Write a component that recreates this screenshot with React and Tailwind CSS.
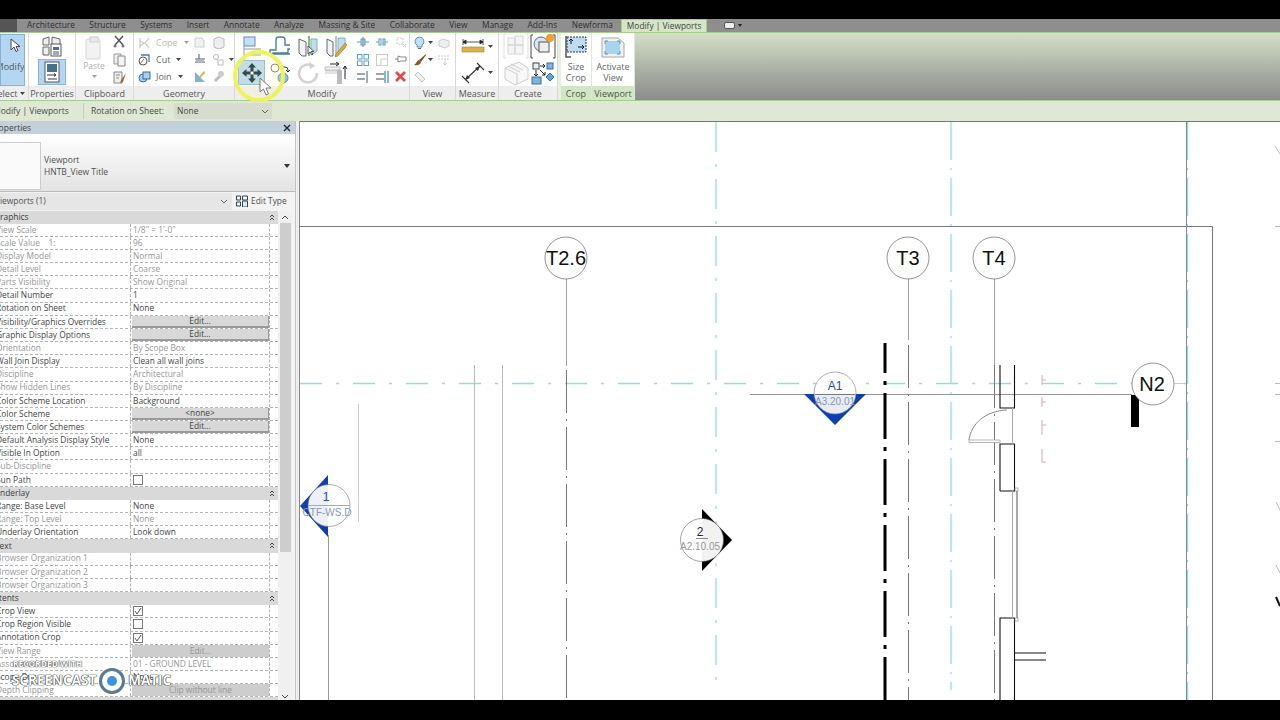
import React from 'react';

const TABS = ['Architecture', 'Structure', 'Systems', 'Insert', 'Annotate', 'Analyze', 'Massing & Site', 'Collaborate', 'View', 'Manage', 'Add-Ins', 'Newforma'];

// row kinds: h = group header, b = button, c = checkbox
const ROWS = [
  { h: 'Graphics', off: '-ml-[6px]' },
  { l: 'View Scale', v: '1/8" = 1\'-0"', d: 1 },
  { l: 'Scale Value    1:', v: '96', d: 1 },
  { l: 'Display Model', v: 'Normal', d: 1 },
  { l: 'Detail Level', v: 'Coarse', d: 1 },
  { l: 'Parts Visibility', v: 'Show Original', d: 1 },
  { l: 'Detail Number', v: '1' },
  { l: 'Rotation on Sheet', v: 'None' },
  { l: 'Visibility/Graphics Overrides', b: 'Edit...' },
  { l: 'Graphic Display Options', b: 'Edit...' },
  { l: 'Orientation', v: 'By Scope Box', d: 1 },
  { l: 'Wall Join Display', v: 'Clean all wall joins' },
  { l: 'Discipline', v: 'Architectural', d: 1 },
  { l: 'Show Hidden Lines', v: 'By Discipline', d: 1 },
  { l: 'Color Scheme Location', v: 'Background' },
  { l: 'Color Scheme', b: '<none>' },
  { l: 'System Color Schemes', b: 'Edit...' },
  { l: 'Default Analysis Display Style', v: 'None' },
  { l: 'Visible In Option', v: 'all' },
  { l: 'Sub-Discipline', v: '', d: 1 },
  { l: 'Sun Path', c: 0 },
  { h: 'Underlay', off: '-ml-[6px]' },
  { l: 'Range: Base Level', v: 'None' },
  { l: 'Range: Top Level', v: 'None', d: 1 },
  { l: 'Underlay Orientation', v: 'Look down' },
  { h: 'Text', off: '-ml-[5px]' },
  { l: 'Browser Organization 1', v: '', d: 1 },
  { l: 'Browser Organization 2', v: '', d: 1 },
  { l: 'Browser Organization 3', v: '', d: 1 },
  { h: 'Extents', off: '-ml-[10px]' },
  { l: 'Crop View', c: 1 },
  { l: 'Crop Region Visible', c: 0 },
  { l: 'Annotation Crop', c: 1 },
  { l: 'View Range', b: 'Edit...', d: 1 },
  { l: 'Associated Level', v: '01 - GROUND LEVEL', d: 1 },
  { l: 'Scope Box', v: 'None' },
  { l: 'Depth Clipping', b: 'Clip without line', d: 1 },
  { h: 'Identity Data', off: '-ml-[6px]' },
];

const Ic = ({ s = 20, h, vb, children }) => (
  <svg width={s} height={h || s} viewBox={vb || `0 0 ${s} ${h || s}`} className="shrink-0">{children}</svg>
);

const Caret = () => (
  <svg width="5" height="3" viewBox="0 0 5 3" className="shrink-0"><path d="M0 0h5L2.500 3z" fill="#444" /></svg>
);

const Panel = ({ w, label, green, children, labelClass = '' }) => (
  <div className={`${w} h-full flex flex-col shrink-0 overflow-hidden border-r ${green ? 'border-[#dcebd0]' : 'border-[#d9d9d9]'}`}>
    <div className="flex-1 min-h-0 flex bg-white">{children}</div>
    <div className={`h-[14px] flex items-center justify-center text-[9px] leading-none whitespace-nowrap ${green ? 'bg-[#d3e6c4] text-[#4b5a45]' : 'bg-[#eeeeee] text-[#555]'} ${labelClass}`}>{label}</div>
  </div>
);

const Small = ({ children }) => <div className="w-[19px] h-[17px] flex items-center justify-center">{children}</div>;

const G = ({ c = '#b9bec4', children }) => <g stroke={c} fill="none">{children}</g>;

function SmallIcon({ k }) {
  const blue = '#5f9fc4';
  const dark = '#445';
  const map = {
    alignA: <G c={blue}><path d="M1 6h4M9 6h4" /><rect x="5" y="3" width="4" height="6" fill="#bcdcf0" /><path d="M7 1v10" stroke="#789" /></G>,
    alignB: <G c={blue}><path d="M1 6h3M10 6h3" /><rect x="4" y="3" width="2" height="6" /><rect x="8" y="3" width="2" height="6" fill="#bcdcf0" /></G>,
    del1: <G c="#ccc"><rect x="3" y="2" width="6" height="6" strokeDasharray="2 1" /><path d="M9 8l3 3M12 8l-3 3" /></G>,
    grid: <G c={blue}><rect x="1.500" y="1.500" width="4.500" height="4.500" /><rect x="8" y="1.500" width="4.500" height="4.500" /><rect x="1.500" y="8" width="4.500" height="4.500" /><rect x="8" y="8" width="4.500" height="4.500" /></G>,
    scale: <G c="#ccc"><rect x="1.500" y="1.500" width="11" height="11" /><path d="M6 12.500V6h6.500" /></G>,
    pin: <G c="#888"><path d="M1 6h3M4 3l3 1h5v4H7l-3 1z" /></G>,
    trimA: <G c={dark}><path d="M1 4h8M1 9h8" /><path d="M11 1v12" stroke="#79a" strokeWidth="1.500" /></G>,
    trimB: <G c={dark}><path d="M1 4h8M1 9h8" /><path d="M10 1v12M13 1v12" stroke={blue} strokeWidth="1.500" /></G>,
    del: <path d="M2 2l9 9M11 2l-9 9" stroke="#dc4b4b" strokeWidth="2.800" fill="none" />,
  };
  return <Ic s={14}>{map[k]}</Ic>;
}

function Ribbon() {
  return (
    <div className="h-[69px] flex border-t border-b border-[#a7cc92] bg-linear-to-b from-[#d3e0c6] to-[#8c8c8c] font-['Open_Sans',sans-serif] text-[#666]">
      {/* Select */}
      <Panel w="w-[29px]" label={<span className="flex items-center gap-[3px] -ml-[10px]">Select <Caret /></span>}>
        <div className="w-[25px] h-[52px] mt-[1px] bg-[#b5d6f1] border border-[#86b2d6] flex flex-col items-center overflow-hidden">
          <div className="mt-[3px] ml-[4px]">
            <Ic s={14}><path d="M3 1v11l3-3 2 4.500 2-1-2-4h4z" fill="#fff" stroke="#445" /></Ic>
          </div>
          <div className="mt-[10px] -ml-[5px] text-[9px] leading-none whitespace-nowrap text-[#555]">Modify</div>
        </div>
      </Panel>

      {/* Properties */}
      <Panel w="w-[47px]" label="Properties">
        <div className="w-full flex flex-col items-center">
          <div className="h-[26px] flex items-center">
            <Ic s={22}>
              <path d="M2 4l6-2v8H2zM11 2l8 2v6h-8zM2 12h6v8H2z" fill="#eee" stroke="#666" />
              <rect x="10" y="9" width="10" height="12" fill="#fff" stroke="#555" />
              <path d="M12 12h6v3h-6z" fill="#47708f" /><path d="M12 17h6M12 19h6" stroke="#555" />
            </Ic>
          </div>
          <div className="w-[28px] h-[26px] bg-[#b5d6f1] border border-[#8ab5d8] flex items-center justify-center">
            <Ic s={18} h={22}>
              <rect x="2" y="1" width="14" height="20" fill="#fff" stroke="#556" />
              <rect x="4" y="3" width="10" height="8" fill="#47708f" />
              <path d="M4 14h9M5 18h9M11 12.500l2 1.500-2 1.500" stroke="#334" fill="none" />
            </Ic>
          </div>
        </div>
      </Panel>

      {/* Clipboard */}
      <Panel w="w-[58px]" label="Clipboard">
        <div className="w-[36px] flex flex-col items-center pt-[3px]">
          <Ic s={20} h={24}>
            <rect x="2" y="3" width="14" height="20" rx="1" fill="#f2f2f2" stroke="#d5d5d5" />
            <rect x="6" y="1" width="8" height="5" fill="#e9e9e9" stroke="#ccc" />
          </Ic>
          <div className="mt-[2px] text-[8.500px] leading-none text-[#b0b0b0]">Paste</div>
          <div className="mt-[4px] opacity-50"><Caret /></div>
        </div>
        <div className="flex flex-col justify-start pt-[1px] gap-[3px]">
          <Ic s={15}><path d="M3 2l8 9M11 2l-8 9" stroke="#555" strokeWidth="1.500" /><circle cx="3" cy="12" r="1.500" fill="#777" /><circle cx="11" cy="12" r="1.500" fill="#777" /></Ic>
          <Ic s={15}><path d="M2 2h7v10H2z" fill="#eee" stroke="#999" /><path d="M6 4h7v10H6z" fill="#f5f5f5" stroke="#888" /></Ic>
          <Ic s={15}><path d="M2 2h8v11H2z" fill="#eee" stroke="#888" /><path d="M4 5h4M4 8h3" stroke="#888" /><path d="M14 3l-5 7-1 3 3-1z" fill="#a06a3a" /></Ic>
        </div>
      </Panel>

      {/* Geometry */}
      <Panel w="w-[101px]" label="Geometry">
        <div className="flex flex-col w-[56px] pl-[4px] pt-[1px] text-[9px] leading-none">
          <div className="h-[17px] flex items-center gap-[5px] text-[#bbb]">
            <Ic s={13}><path d="M2 2v10M2 5l4 2-4 3M11 2L7 7l4 5" stroke="#ccc" fill="none" strokeWidth="1.300" /></Ic>Cope<span className="ml-[1px] opacity-50"><Caret /></span>
          </div>
          <div className="h-[17px] flex items-center gap-[5px] text-[#666]">
            <Ic s={13}><circle cx="5" cy="8" r="4" fill="#fff" stroke="#555" /><path d="M3 2h8v7" stroke="#3f7fb0" fill="none" strokeWidth="1.300" /><path d="M2 11l4-5" stroke="#c54" /></Ic>Cut<span className="ml-[1px]"><Caret /></span>
          </div>
          <div className="h-[17px] flex items-center gap-[5px] text-[#666]">
            <Ic s={13}><circle cx="5" cy="8" r="4" fill="#a9cfe9" stroke="#35709c" /><rect x="5" y="2" width="7" height="7" fill="#a9cfe9" stroke="#35709c" /></Ic>Join<span className="ml-[1px]"><Caret /></span>
          </div>
        </div>
        <div className="grid grid-cols-[19px_19px_6px] grid-rows-[17px_17px_17px] pt-[1px] items-center justify-items-center">
          <Ic s={13}><path d="M2 2h7l2 3v6H2z" fill="#eef2f5" stroke="#ccc" /></Ic>
          <Ic s={13}><path d="M2 3l5-2 5 2v8l-5 2-5-2z" fill="#eee" stroke="#bbb" /></Ic>
          <span />
          <Ic s={13}><path d="M6 1v5M2 6h10M2 9h10" stroke="#557" /><rect x="3" y="7" width="8" height="2" fill="#abc" /></Ic>
          <Ic s={13}><circle cx="4" cy="4" r="2.500" fill="none" stroke="#bbb" /><rect x="6" y="7" width="5" height="5" fill="none" stroke="#bbb" /></Ic>
          <Caret />
          <Ic s={13}><path d="M2 2v10h10z" fill="#7fb5dc" /><path d="M11 1L6 7l-1 2 2-1 5-5z" fill="#d8a93c" /></Ic>
          <Ic s={13}><path d="M3 11l5-5" stroke="#bbb" strokeWidth="3" /><circle cx="9" cy="4" r="3" fill="#ccc" /></Ic>
          <span />
        </div>
      </Panel>

      {/* Modify */}
      <Panel w="w-[175px]" label="Modify">
        <div className="grid grid-cols-[29px_28px_28px_28px] grid-rows-[26px_27px] w-[116px] pl-[2px] justify-items-center items-center">
          <Ic s={22}><rect x="3" y="2" width="11" height="9" fill="#c6dff2" stroke="#5f8fb5" /><path d="M3 11v9h17M3 14h17" stroke="#999" fill="none" /></Ic>
          <Ic s={24}><path d="M2 20v-4h6V6a3 3 0 0 1 3-3h3a3 3 0 0 1 3 3v5h5M2 20h20M5 20v-1h15v-4h2" fill="none" stroke="#4c7ea5" strokeWidth="1.400" /></Ic>
          <Ic s={22}><path d="M2 4l7 3v14H5l-3-3z" fill="#f1f3f5" stroke="#667" /><path d="M12 1v20" stroke="#52a350" strokeWidth="1.500" /><path d="M14 4h6v12l-6 4z" fill="#c0dcf0" stroke="#7ba" /><path d="M11 11v8l2-2 2 3 1-1-2-2.500h3z" fill="#fff" stroke="#556" /></Ic>
          <Ic s={22}><path d="M2 4l6 3v14H5l-3-3z" fill="#f1f3f5" stroke="#667" /><path d="M11 1v20" stroke="#789" /><path d="M13 3h7v10l-7 6z" fill="#c0dcf0" stroke="#7ba" /><path d="M20 8L11 19l-1 3 3-1 9-11z" fill="#dca93c" stroke="#8a6a20" strokeWidth=".5" /></Ic>

          <div className="w-[27px] h-[25px] bg-[#b8d9f2] border border-[#8ab5d8] flex items-center justify-center">
            <Ic s={22}>
              <path d="M11 1l4 4.500h-2.500V9h-3V5.500H7zM11 21l4-4.500h-2.500V13h-3v3.500H7zM1 11l4.500-4v2.500H9v3H5.500V15zM21 11l-4.500-4v2.500H13v3h3.500V15z" fill="#152c3a" />
              <rect x="9.500" y="9.500" width="3" height="3" fill="#fff" stroke="#445" strokeWidth=".6" />
            </Ic>
          </div>
          <Ic s={22}><circle cx="6" cy="6" r="4" fill="#fff" stroke="#777" /><circle cx="14" cy="16" r="5" fill="#8fc0e2" stroke="#5f8fb5" /><path d="M11 5h5a3 3 0 0 1 3 3v2M17 8l2 2 2-2" fill="none" stroke="#333" /></Ic>
          <Ic s={24}><path d="M17 5a9 9 0 1 0 4 7" fill="none" stroke="#d2d2d2" strokeWidth="2.500" /><path d="M13 1l6 4-5 3z" fill="#cfcfcf" /></Ic>
          <Ic s={24}><path d="M1 6h15v7H1" fill="#e2e2e2" /><path d="M1 6h15v3H1z" fill="#f2f2f2" stroke="#999" strokeWidth=".6" /><path d="M13 9h5v14h-5z" fill="#bbb" /><path d="M21 18V5M19 8l2-3 2 3M6 3h8M12 1l3 2-3 2" stroke="#223" fill="none" /></Ic>
        </div>
        <div className="grid grid-cols-[19px_19px_19px] grid-rows-[17px_17px_17px] ml-[3px] pt-[1px] justify-items-center items-center">
          <Small><SmallIcon k="alignA" /></Small><Small><SmallIcon k="alignB" /></Small><Small><SmallIcon k="del1" /></Small>
          <Small><SmallIcon k="grid" /></Small><Small><SmallIcon k="scale" /></Small><Small><SmallIcon k="pin" /></Small>
          <Small><SmallIcon k="trimA" /></Small><Small><SmallIcon k="trimB" /></Small><Small><SmallIcon k="del" /></Small>
        </div>
      </Panel>

      {/* View */}
      <Panel w="w-[46px]" label="View">
        <div className="grid grid-cols-[13px_8px_19px] grid-rows-[17px_17px_17px] pl-[3px] pt-[1px] justify-items-center items-center">
          <Ic s={13}><path d="M6.500 1a4.500 4.500 0 0 1 2.500 8.200V11H4V9.200A4.500 4.500 0 0 1 6.500 1z" fill="#bfe0f5" stroke="#5f8fb5" /><path d="M5 12.500h3" stroke="#667" /></Ic>
          <Caret />
          <Ic s={14}><path d="M2 5l4-2 6 2v5l-4 2-6-2z" fill="#eee" stroke="#ccc" /></Ic>
          <Ic s={14}><path d="M13 1L6 7l2 2 5-7z" fill="#7b5330" /><path d="M6 7c-2 0-2 3-5 5 4 1 7-1 7-3z" fill="#8a5a2e" /></Ic>
          <Caret />
          <Ic s={14}><path d="M1 3h12M1 6h12" stroke="#ccc" strokeDasharray="2 1" /><path d="M8 7v5M6 10l2 2 2-2" stroke="#ccc" fill="none" /></Ic>
          <Ic s={14}><path d="M2 5l3-3 7 7-3 3z" fill="#f0f0f0" stroke="#c4c4c4" /></Ic>
          <span /><span />
        </div>
      </Panel>

      {/* Measure */}
      <Panel w="w-[43px]" label="Measure">
        <div className="grid grid-cols-[26px_8px] grid-rows-[26px_27px] pl-[4px] items-center justify-items-center">
          <Ic s={24} h={16}><path d="M2 4h20M2 1v6M22 1v6M2 4l3-2v4zM22 4l-3-2v4z" stroke="#223" fill="#223" strokeWidth=".8" /><rect x="1" y="9" width="22" height="5" fill="#dcb14e" stroke="#a5822f" strokeWidth=".6" /></Ic>
          <Caret />
          <Ic s={24}><path d="M4 19L19 5M1 15l7 7M16 2l7 7" stroke="#333" strokeWidth="1.100" fill="none" /><path d="M4 19l2-5 3 3zM19 5l-2 5-3-3z" fill="#333" /></Ic>
          <Caret />
        </div>
      </Panel>

      {/* Create */}
      <Panel w="w-[59px]" label="Create">
        <div className="grid grid-cols-[29px_26px] grid-rows-[26px_27px] pl-[2px] items-center justify-items-center">
          <Ic s={26}><path d="M3 1H1v24h2M23 1h2v24h-2" stroke="#ddd" fill="none" /><path d="M5 5h7v7H5zM12 3h8v9h-8zM5 12h7v9H5zM12 12h8v9h-8z" fill="#f5f5f5" stroke="#d5d5d5" /></Ic>
          <Ic s={26}><path d="M3 2H1v23h2M23 2h2v23h-2" stroke="#444" fill="none" /><circle cx="11" cy="11" r="7" fill="#d8e6ef" stroke="#667" /><rect x="9" y="9" width="10" height="10" fill="#eee" stroke="#555" /><circle cx="20" cy="5" r="4" fill="#f0a030" /></Ic>
          <Ic s={28}><path d="M3 9l14-6 9 6v11L13 26 3 20z" fill="#f7f7f7" stroke="#ccc" /><path d="M3 9l12 6v11M6 7l12 6M9 5l12 6" stroke="#ccc" fill="none" /></Ic>
          <Ic s={24}>
            <rect x="2" y="2" width="6" height="6" fill="#eee" stroke="#445" /><rect x="16" y="2" width="6" height="6" fill="#7fb5dc" stroke="#3a6f96" />
            <path d="M9 5h5M12 3l2 2-2 2M5 9v6M3 13l2 2 2-2M9 9l5 5M11 14h3v-3" stroke="#222" fill="none" />
            <rect x="1" y="16" width="9" height="7" fill="#7fb5dc" stroke="#3a6f96" /><path d="M19 12l4 4-4 4-4-4z" fill="#5fa7d6" stroke="#3a6f96" />
          </Ic>
        </div>
      </Panel>
      <div className="w-[3px] h-full bg-[#e6f0dd]" />

      {/* Crop */}
      <Panel w="w-[31px]" green label="Crop">
        <div className="w-full flex flex-col items-center">
          <div className="mt-[2px]">
            <Ic s={24}>
              <rect x="3" y="2" width="19" height="15" fill="#bcdcf0" stroke="#335" strokeDasharray="2 1" />
              <path d="M2 1v21h5" stroke="#555" strokeWidth="1.500" fill="none" />
              <path d="M7 4v5M5 6l2-2 2 2M14 12h6M18 10l2 2-2 2" stroke="#112" fill="none" />
            </Ic>
          </div>
          <div className="mt-[2px] text-[9px] leading-[11px] text-center text-[#666]">Size<br />Crop</div>
        </div>
      </Panel>

      {/* Viewport */}
      <Panel w="w-[43px]" green label="Viewport">
        <div className="w-full flex flex-col items-center">
          <div className="mt-[2px]">
            <Ic s={24}>
              <path d="M1 3h16l6 5v14H1z" fill="#f1f1f1" stroke="#a8a8a8" />
              <rect x="4" y="6" width="15" height="13" fill="#a8d4ee" />
              <path d="M4 9V6h3M16 6h3v3M4 16v3h3M16 19h3v-3" stroke="#5e8fb0" fill="none" />
            </Ic>
          </div>
          <div className="mt-[2px] text-[9px] leading-[11px] text-center text-[#666]">Activate<br />View</div>
        </div>
      </Panel>
    </div>
  );
}

const Check = ({ on }) => (
  <div className="w-[10px] h-[10px] ml-[2px] border border-[#777] bg-white flex items-center justify-center">
    {on ? <svg width="8" height="8" viewBox="0 0 8 8"><path d="M1 4l2 3 4-6" stroke="#555" fill="none" /></svg> : null}
  </div>
);

function Row({ row }) {
  if (row.h) {
    return (
      <div className="h-[13.160px] shrink-0 bg-[#d9d9d9] flex items-center justify-between overflow-hidden pr-[3px] text-[#3c3c3c]">
        <span className={row.off}>{row.h}</span>
        <svg width="6" height="7" viewBox="0 0 6 7"><path d="M1 3l2-2 2 2M1 6l2-2 2 2" stroke="#444" fill="none" /></svg>
      </div>
    );
  }
  const labelColor = row.d ? 'text-[#969696]' : 'text-[#444]';
  return (
    <div className="h-[13.160px] shrink-0 flex items-stretch border-b border-dashed border-[#b4b4b4] bg-white">
      <div className={`w-[131px] shrink-0 flex items-center overflow-hidden whitespace-pre border-r border-dashed border-[#b4b4b4] ${labelColor}`}>
        <span className="-ml-[4px]">{row.l}</span>
      </div>
      <div className="w-[139px] shrink-0 flex items-center border-r border-dashed border-[#b4b4b4]">
        {row.b ? (
          <div className={`w-[138px] h-[12px] ml-[1px] flex items-center justify-center ${row.d ? 'bg-[#cdcdcd] text-[#969696]' : 'bg-[#d8d8d8] border-b-2 border-r border-[#9a9a9a] text-[#444]'}`}>{row.b}</div>
        ) : row.c !== undefined ? (
          <Check on={row.c} />
        ) : (
          <span className={`pl-[2px] whitespace-nowrap ${row.d ? 'text-[#969696]' : 'text-[#444]'}`}>{row.v}</span>
        )}
      </div>
    </div>
  );
}

function Properties() {
  return (
    <div className="w-[296px] h-full shrink-0 flex flex-col bg-[#f3f3f3] overflow-hidden font-['Open_Sans',sans-serif] text-[8.400px] leading-none border-r border-[#c4c4c4]">
      <div className="h-[13px] shrink-0 bg-[#c3d1dd] flex items-center justify-between pr-[4px] pt-[1px] text-[#444] text-[8.500px]">
        <span className="-ml-[10px]">Properties</span>
        <svg width="8" height="8" viewBox="0 0 8 8"><path d="M1 1l6 6M7 1L1 7" stroke="#223" strokeWidth="1.400" /></svg>
      </div>
      <div className="h-[58px] shrink-0 flex items-center bg-linear-to-b from-white to-[#e3e3e3] border-b border-[#bbb]">
        <div className="w-[41px] h-[48px] mt-[7px] bg-[#fafafa] border border-[#ccc] border-l-0" />
        <div className="ml-[3px] mt-[7px] flex flex-col gap-[4px] text-[#505050] text-[8.500px] flex-1">
          <span>Viewport</span>
          <span>HNTB_View Title</span>
        </div>
        <svg width="6" height="4" viewBox="0 0 6 4" className="mr-[5px] mt-[7px]"><path d="M0 0h6L3 4z" fill="#333" /></svg>
      </div>
      <div className="h-[18.500px] shrink-0 flex items-center">
        <div className="w-[232px] h-[17px] bg-[#e6e6e6] flex items-center justify-between pr-[4px] overflow-hidden text-[#505050]">
          <span className="-ml-[5px]">Viewports (1)</span>
          <svg width="8" height="5" viewBox="0 0 8 5"><path d="M1 1l3 3 3-3" stroke="#666" fill="none" /></svg>
        </div>
        <div className="ml-[4px] flex items-center gap-[3px] text-[#505050]">
          <svg width="12" height="12" viewBox="0 0 12 12"><path d="M.5 1h4v4h-4zM6.500 1h5v4h-5zM.5 7h4v4h-4z" fill="none" stroke="#345" /><path d="M6.500 6h5v6h-5z" fill="#dcebf5" stroke="#345" /></svg>
          <span>Edit Type</span>
        </div>
      </div>
      <div className="flex-1 min-h-0 flex">
        <div className="w-[278px] shrink-0 flex flex-col overflow-hidden">
          {ROWS.map((r, i) => <Row key={i} row={r} />)}
        </div>
        <div className="w-[14px] shrink-0 flex flex-col items-center bg-[#f0f0f0] relative">
          <svg width="8" height="5" viewBox="0 0 8 5" className="mt-[4px] mb-[3px]"><path d="M1 4l3-3 3 3" stroke="#444" fill="none" /></svg>
          <div className="w-[11px] h-[329px] bg-[#cdcdcd]" />
          <svg width="8" height="5" viewBox="0 0 8 5" className="mt-auto mb-[1px]"><path d="M1 1l3 3 3-3" stroke="#444" fill="none" /></svg>
        </div>
      </div>
    </div>
  );
}

const cyan = '#8fe0e0';
const mono = { fontFamily: '"Liberation Sans", Arial, sans-serif' };

function GridBubble({ cx, label }) {
  return (
    <g>
      <circle cx={cx} cy="258" r="21" fill="#fff" stroke="#666" strokeWidth=".7" />
      <text x={cx} y="265" textAnchor="middle" fontSize="20" fill="#111" style={mono}>{label}</text>
    </g>
  );
}

function Drawing() {
  return (
    <svg viewBox="299 121 981 579" className="w-[981px] h-[579px] shrink-0 bg-white">
      <path d="M299 121.500H1280" stroke="#777" />
      <path d="M299.500 121V700" stroke="#888" />
      <path d="M299 226.500H1212.500V700" stroke="#777" fill="none" />

      {/* cyan reference planes */}
      <path d="M716 122V690" stroke={cyan} strokeWidth="1.300" strokeDasharray="30 12 3 12" />
      <path d="M951 122V690" stroke={cyan} strokeWidth="1.300" strokeDasharray="38 8 2 8" />
      <path d="M1187.500 122V700" stroke={cyan} strokeWidth="1.500" strokeDasharray="38 8 2 8" />
      <path d="M1186.500 122V700" stroke="#888" />
      <path d="M300 383.500H1186" stroke={cyan} strokeWidth="1.500" strokeDasharray="22 14 3 14" />

      {/* grids */}
      <path d="M566.500 279V366M908.500 279V340M994.500 279V365" stroke="#888" strokeWidth=".8" />
      <path d="M566.500 370V700M908.500 345V700M994.500 365V700" stroke="#666" strokeWidth=".9" strokeDasharray="43 6 2 6" />
      <GridBubble cx="566" label="T2.6" />
      <GridBubble cx="908" label="T3" />
      <GridBubble cx="994" label="T4" />

      {/* faint walls */}
      <path d="M474.500 365V700M502.500 365V700" stroke="#bbb" />
      <path d="M358.500 404V522" stroke="#ccc" />
      <path d="M328.500 535V700" stroke="#999" />

      {/* section line and thick dash */}
      <path d="M750 394.500H1132" stroke="#888" strokeWidth=".9" />
      <path d="M885 343V700" stroke="#000" strokeWidth="3" strokeDasharray="46 8 4 8" strokeDashoffset="16" />

      {/* A1 tag */}
      <path d="M804 394H866L835 425Z" fill="#0d3fb0" />
      <circle cx="835" cy="393" r="21" fill="#fff" fillOpacity=".9" stroke="#777" strokeWidth=".6" />
      <path d="M815 394.500H855" stroke="#777" />
      <text x="835" y="390" textAnchor="middle" fontSize="12" fill="#2a4aa0" style={mono}>A1</text>
      <text x="835" y="405" textAnchor="middle" fontSize="10" fill="#8a96b8" style={mono}>A3.20.01</text>

      {/* N2 */}
      <rect x="1131" y="395" width="8" height="32" fill="#000" />
      <circle cx="1153" cy="384" r="21" fill="#fff" stroke="#666" strokeWidth=".7" />
      <path d="M1174 383.500H1186" stroke={cyan} />
      <text x="1152" y="391" textAnchor="middle" fontSize="20" fill="#111" style={mono}>N2</text>

      {/* walls and door */}
      <path d="M1000 365V408H1014.500V365M1000 491V444H1014.500V491H1000M1000 700V618H1014.500V700M1014.500 653H1046M1014.500 660H1046" stroke="#111" strokeWidth="1.100" fill="none" />
      <path d="M1012.500 408V444M1012.500 491V618" stroke="#aaa" />
      <path d="M1017 490V620" stroke="#aaa" strokeWidth="2" />
      <rect x="1015" y="488" width="3" height="3" fill="#fff" stroke="#888" strokeWidth=".6" />
      <rect x="1015" y="618" width="3" height="3" fill="#fff" stroke="#888" strokeWidth=".6" />
      <path d="M1007 410C985 411 971 424 969 440" stroke="#888" fill="none" />
      <rect x="969" y="440" width="31" height="2.500" fill="#fff" stroke="#999" strokeWidth=".7" />

      {/* red hidden lines */}
      <path d="M1042 375V385M1042 380H1046M1042 397V407M1042 402H1046M1042 420V435M1042 425H1046M1042 449V462H1046" stroke="#dca8a8" fill="none" />

      {/* section 1 */}
      <path d="M300 506L328 475V537Z" fill="#0d3fb0" />
      <circle cx="329" cy="505.500" r="21" fill="#fff" fillOpacity=".92" stroke="#777" strokeWidth=".6" />
      <path d="M308 505.500H350" stroke="#aaa" />
      <text x="326" y="501" textAnchor="middle" fontSize="12" fill="#2a4aa0" style={mono}>1</text>
      <text x="327" y="516" textAnchor="middle" fontSize="10" fill="#8a96b8" style={mono}>CTF-WS.D</text>

      {/* section 2 */}
      <path d="M702 509L732 540L702 571Z" fill="#000" />
      <circle cx="702" cy="540" r="21.500" fill="#fff" fillOpacity=".95" stroke="#666" strokeWidth=".6" />
      <path d="M696 538.500H708" stroke="#888" />
      <text x="700" y="536" textAnchor="middle" fontSize="12" fill="#222" style={mono}>2</text>
      <text x="700" y="550" textAnchor="middle" fontSize="10" fill="#999" style={mono}>A2.10.05</text>

      {/* stuff cut off at the right edge */}
      <path d="M1275 146L1280 154M1275 226.500H1280M1275 383.500H1280M1275 394.500H1280M1275 441.500H1280M1276 502L1280 510M1276 565L1280 573" stroke="#bbb" />
      <path d="M1276 597L1280 606" stroke="#111" strokeWidth="2" />
    </svg>
  );
}

export default function App() {
  return (
    <div className="relative w-[1280px] h-[720px] overflow-hidden bg-black flex flex-col">
      <div className="h-[19px] shrink-0" />
      {/* tabs */}
      <div className="h-[13px] shrink-0 flex items-center bg-[#8e8e8e] font-['Open_Sans',sans-serif] text-[8.400px] leading-none text-[#2f2f2f]">
        <div className="w-[17px] h-full bg-[#555] shrink-0 mr-[10px]" />
        <div className="flex items-center gap-[14.400px]">
          {TABS.map(t => <span key={t} className="whitespace-nowrap">{t}</span>)}
        </div>
        <div className="ml-[8px] h-full px-[5px] bg-[#d4e6c6] border-x border-t border-[#a7cc92] flex items-center whitespace-nowrap text-[#444]">Modify | Viewports</div>
        <div className="ml-[17px] flex items-center gap-[3px]">
          <div className="w-[11px] h-[7px] bg-[#eee] border border-[#555] rounded-[2px]" />
          <svg width="4" height="3" viewBox="0 0 4 3"><path d="M0 0h4L2 3z" fill="#222" /></svg>
        </div>
      </div>

      <Ribbon />

      {/* options bar */}
      <div className="h-[20px] shrink-0 flex items-center bg-[#dfe8d5] font-['Open_Sans',sans-serif] text-[8.500px] leading-none text-[#484848]">
        <span className="w-[83px] -ml-[7px] pt-[1px] whitespace-nowrap shrink-0">Modify | Viewports</span>
        <div className="w-px h-[16px] bg-[#c3cdb9] ml-[7px]" />
        <span className="ml-[7px] pt-[1px] w-[83px] whitespace-nowrap">Rotation on Sheet:</span>
        <div className="w-[98px] h-[16px] bg-[#d7dccf] flex items-center justify-between px-[3px]">
          <span className="pt-[1px]">None</span>
          <svg width="8" height="5" viewBox="0 0 8 5"><path d="M1 1l3 3 3-3" stroke="#666" fill="none" /></svg>
        </div>
      </div>

      <div className="h-[579px] shrink-0 flex overflow-hidden">
        <Properties />
        <div className="w-[3px] shrink-0 bg-[#eeeeee]" />
        <Drawing />
      </div>
      <div className="flex-1" />

      {/* mouse highlight and cursor from the recording */}
      <div className="absolute left-[233px] top-[50px] w-[52px] h-[52px] rounded-full border-[4px] border-[#eef25c] bg-[#f7f7a0]/15 blur-[0.5px]" />
      <svg width="14" height="20" viewBox="0 0 14 20" className="absolute left-[259px] top-[77px]">
        <path d="M1 1v14l3.500-3 2.500 6 2.500-1-2.500-6H12z" fill="#fff" stroke="#777" />
      </svg>

      {/* screencast watermark */}
      <div className="absolute left-[13px] top-[660px] font-['Open_Sans',sans-serif] text-[8.400px] font-bold leading-none text-white [text-shadow:0_0_1px_#222,0_0_1px_#222]">RECORDED WITH</div>
      <div className="absolute left-[12px] top-[668px] flex items-center gap-[3px] font-['Open_Sans',sans-serif] text-[13.500px] font-bold leading-none text-white [text-shadow:0_0_1px_#222,0_0_1px_#222,0_0_1px_#222]">
        <span>SCREENCAST</span>
        <div className="w-[26px] h-[26px] rounded-full bg-white border-[3px] border-[#5a7a90] flex items-center justify-center">
          <div className="w-[10px] h-[10px] rounded-full bg-[#3e94d8]" />
        </div>
        <span>MATIC</span>
      </div>
    </div>
  );
}
